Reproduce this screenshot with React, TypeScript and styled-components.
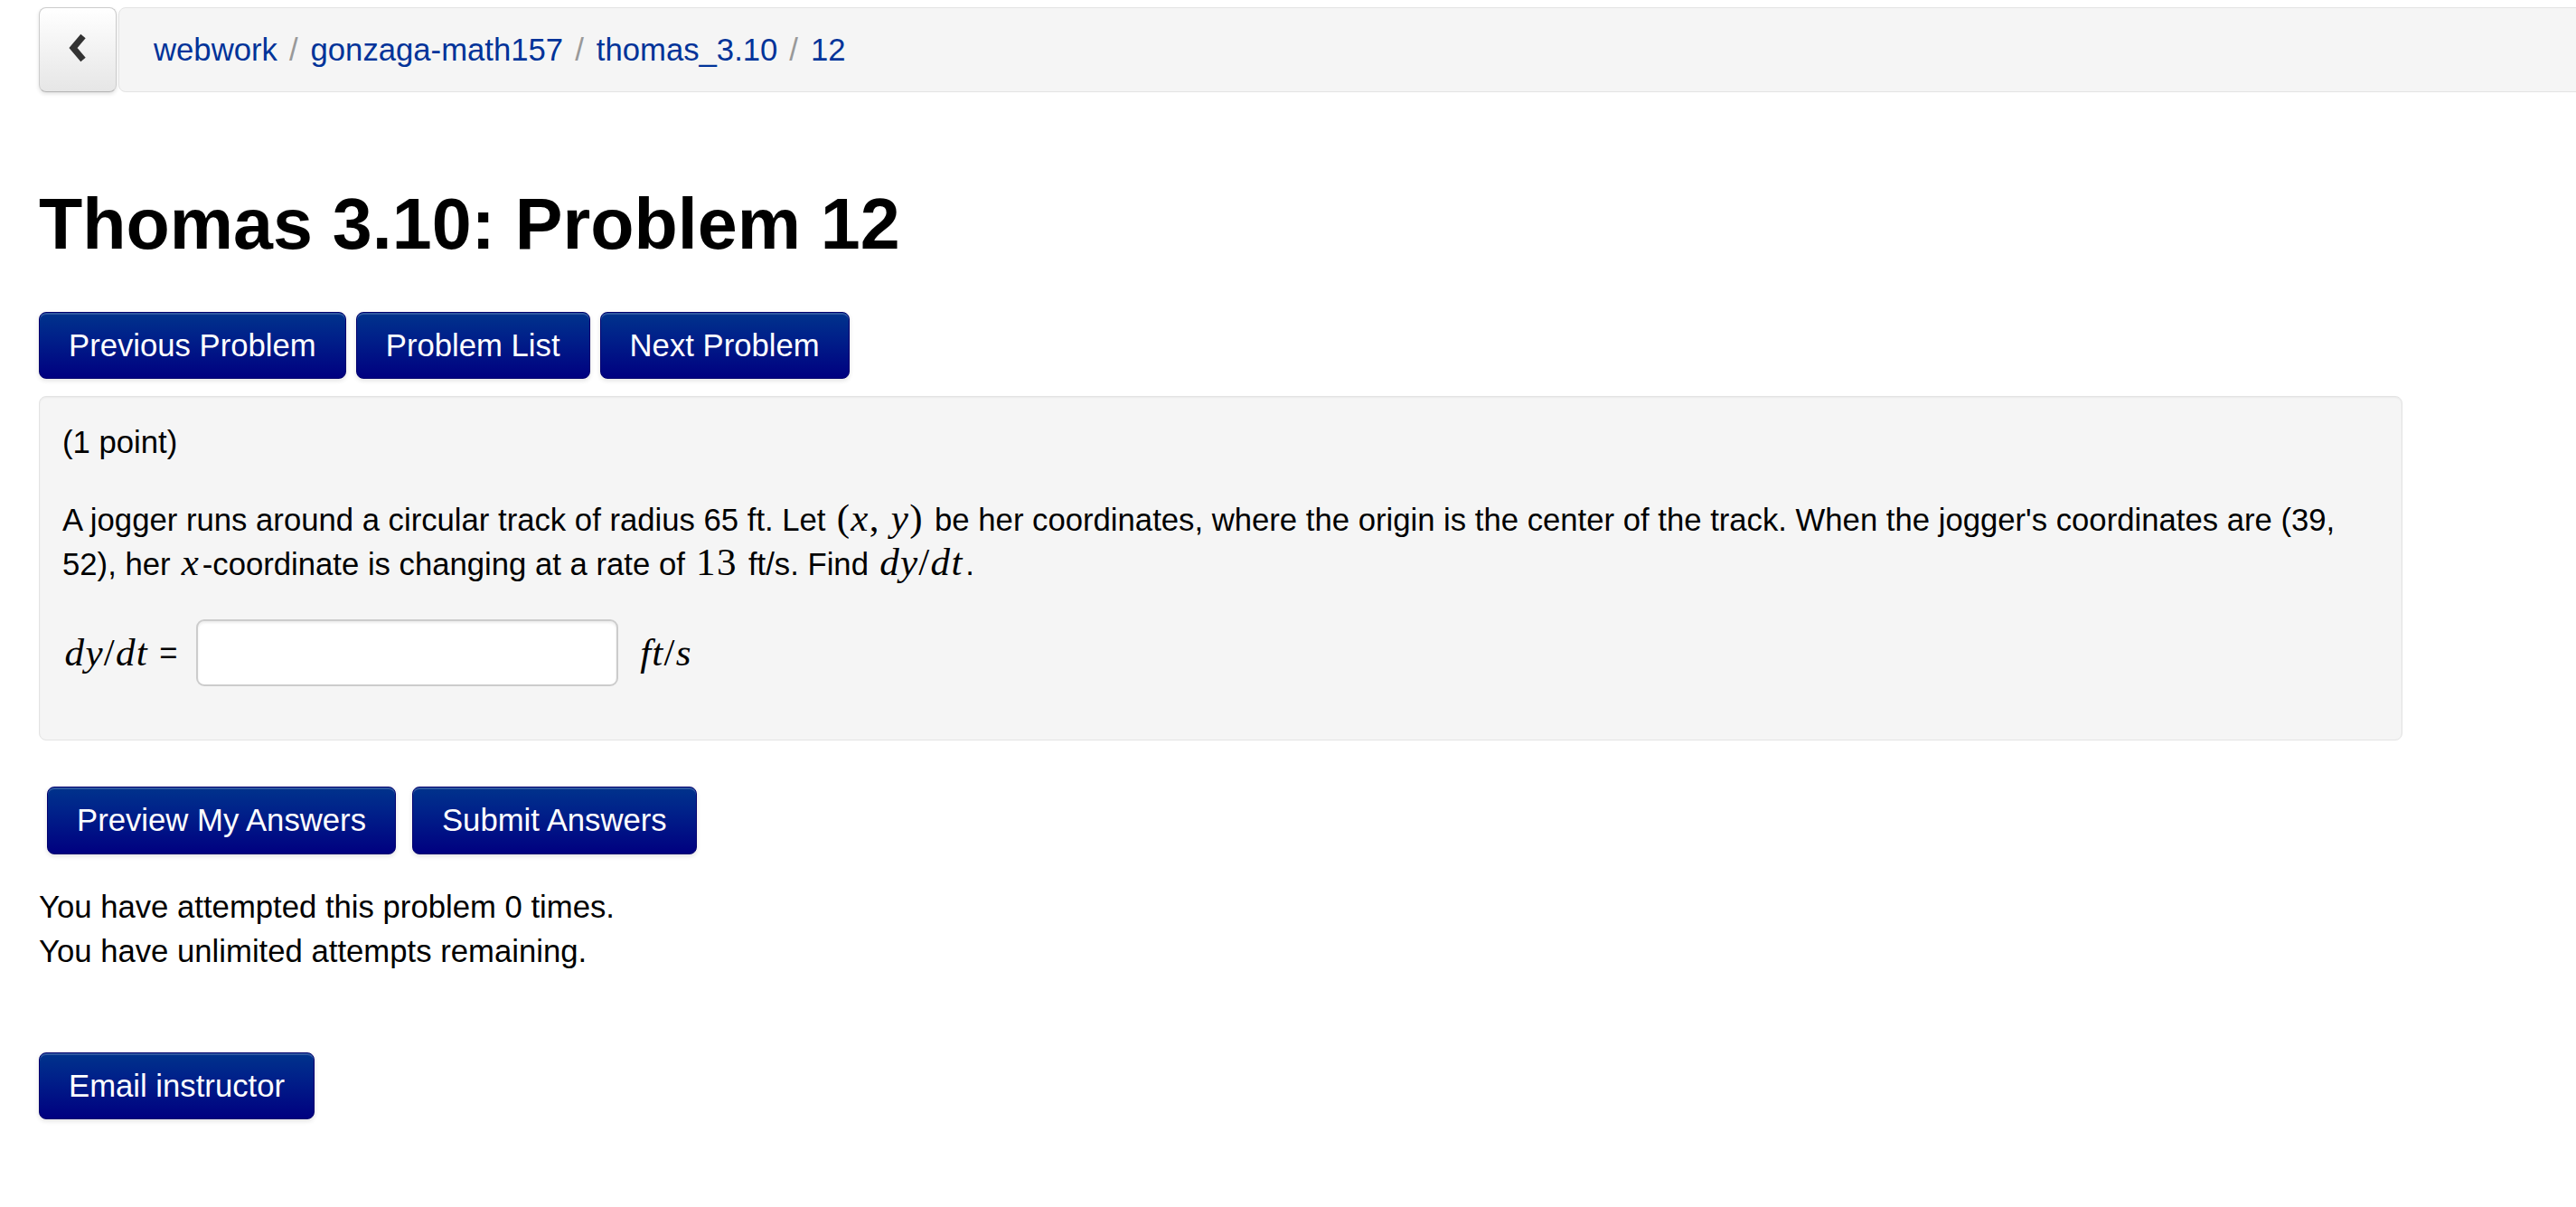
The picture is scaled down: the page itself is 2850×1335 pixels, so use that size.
import React from "react";
import styled, { createGlobalStyle } from "styled-components";

const GlobalStyle = createGlobalStyle`
  html, body {
    margin: 0;
    padding: 0;
    background: #ffffff;
    overflow-x: hidden;
  }
  body {
    font-family: "Liberation Sans", Arial, sans-serif;
    font-size: 34.7px;
    line-height: 49px;
    color: #000000;
  }
`;

const Page = styled.div`
  padding: 8px 0 80px 43px;
`;

const TopBar = styled.nav`
  display: flex;
  gap: 2px;
  margin-right: -16px;
`;

const BackButton = styled.button`
  width: 86px;
  height: 94px;
  flex: none;
  display: flex;
  align-items: center;
  justify-content: center;
  padding: 0 0 4px;
  border: 1px solid #cccccc;
  border-bottom-color: #b3b3b3;
  border-radius: 8px;
  background: linear-gradient(to bottom, #ffffff, #e6e6e6);
  box-shadow: 0 2px 4px rgba(0, 0, 0, 0.12);
  cursor: pointer;
`;

const Crumbs = styled.ol`
  flex: 1;
  display: flex;
  align-items: center;
  height: 94px;
  box-sizing: border-box;
  margin: 0;
  padding: 0 0 0 38px;
  list-style: none;
  background: #f5f5f5;
  border: 1px solid #e3e3e3;
  border-radius: 8px;
`;

const Crumb = styled.li`
  display: flex;
  align-items: center;
`;

const CrumbLink = styled.a`
  color: #003399;
  text-decoration: none;
`;

const Divider = styled.span`
  color: #999999;
  padding: 0 14px 0 13px;
`;

const Content = styled.main`
  width: 2615px;
`;

const Title = styled.h1`
  margin: 102px 0 54px;
  font-size: 79px;
  line-height: 87px;
  font-weight: 700;
`;

const ButtonRow = styled.div<{ $gap: number; $indent?: number }>`
  display: flex;
  gap: ${(p) => p.$gap}px;
  padding-left: ${(p) => p.$indent ?? 0}px;
`;

const NavButton = styled.button<{ $tall?: boolean }>`
  height: ${(p) => (p.$tall ? 75 : 74)}px;
  padding: 0 32px;
  font-family: inherit;
  font-size: 34.7px;
  color: #ffffff;
  border: 1px solid #00006e;
  border-radius: 8px;
  background: linear-gradient(to bottom, #00338c 0%, #00228a 35%, #000080 100%);
  box-shadow: inset 0 2px 0 rgba(255, 255, 255, 0.18), 0 2px 5px rgba(0, 0, 0, 0.12);
  cursor: pointer;
`;

const Well = styled.section`
  margin-top: 19px;
  padding: 26px 25px 59px;
  background: #f5f5f5;
  border: 1px solid #e3e3e3;
  border-radius: 8px;
  box-shadow: inset 0 1px 2px rgba(0, 0, 0, 0.05);
`;

const Points = styled.div``;

const Statement = styled.p`
  margin: 37px 0 0;
`;

const Math = styled.span`
  font-family: "Liberation Serif", "Times New Roman", serif;
  font-style: italic;
  font-size: 1.24em;
  line-height: 1;
  padding: 0 0.06em;
  letter-spacing: 0.03em;
`;

const Upright = styled.span`
  font-style: normal;
`;

const AnswerRow = styled.div`
  display: flex;
  align-items: center;
  margin-top: 36px;
`;

const Label = styled.span`
  white-space: pre;
`;

const AnswerInput = styled.input`
  width: 467px;
  height: 74px;
  box-sizing: border-box;
  margin: 0 22px 0 20px;
  padding: 0 12px;
  font-family: inherit;
  font-size: 34.7px;
  background: #ffffff;
  border: 2px solid #cccccc;
  border-radius: 9px;
  box-shadow: inset 0 2px 3px rgba(0, 0, 0, 0.08);
  outline: none;
`;

const Attempts = styled.div`
  margin-top: 34px;
`;

const EmailRow = styled.div`
  margin-top: 87px;
`;

const ChevronLeft = () => (
  <svg width="22" height="34" viewBox="0 0 22 34" aria-hidden="true">
    <polyline
      points="17,4 6,17 17,30"
      fill="none"
      stroke="#333333"
      strokeWidth="7"
      strokeLinejoin="miter"
    />
  </svg>
);

const crumbs = ["webwork", "gonzaga-math157", "thomas_3.10", "12"];

export default function App() {
  return (
    <>
      <GlobalStyle />
      <Page>
        <TopBar>
          <BackButton aria-label="Back">
            <ChevronLeft />
          </BackButton>
          <Crumbs>
            {crumbs.map((c, i) => (
              <Crumb key={c}>
                <CrumbLink href="#">{c}</CrumbLink>
                {i < crumbs.length - 1 && <Divider>/</Divider>}
              </Crumb>
            ))}
          </Crumbs>
        </TopBar>

        <Content>
          <Title>Thomas 3.10: Problem 12</Title>

          <ButtonRow $gap={11}>
            <NavButton>Previous Problem</NavButton>
            <NavButton>Problem List</NavButton>
            <NavButton>Next Problem</NavButton>
          </ButtonRow>

          <Well>
            <Points>(1 point)</Points>
            <Statement>
              A jogger runs around a circular track of radius 65 ft. Let{" "}
              <Math>
                <Upright>(</Upright>x<Upright>,</Upright> y<Upright>)</Upright>
              </Math>{" "}
              be her coordinates, where the origin is the center of the track. When the
              jogger's coordinates are (39, 52), her <Math>x</Math>-coordinate is changing
              at a rate of <Math><Upright>13</Upright></Math> ft/s. Find{" "}
              <Math>
                dy<Upright>/</Upright>dt
              </Math>
              .
            </Statement>
            <AnswerRow>
              <Math>
                dy<Upright>/</Upright>dt
              </Math>
              <Label> =</Label>
              <AnswerInput type="text" aria-label="dy/dt" />
              <Math>
                ft<Upright>/</Upright>s
              </Math>
            </AnswerRow>
          </Well>

          <ButtonRow $gap={18} $indent={9} style={{ marginTop: 51 }}>
            <NavButton $tall>Preview My Answers</NavButton>
            <NavButton $tall>Submit Answers</NavButton>
          </ButtonRow>

          <Attempts>
            You have attempted this problem 0 times.
            <br />
            You have unlimited attempts remaining.
          </Attempts>

          <EmailRow>
            <NavButton>Email instructor</NavButton>
          </EmailRow>
        </Content>
      </Page>
    </>
  );
}
